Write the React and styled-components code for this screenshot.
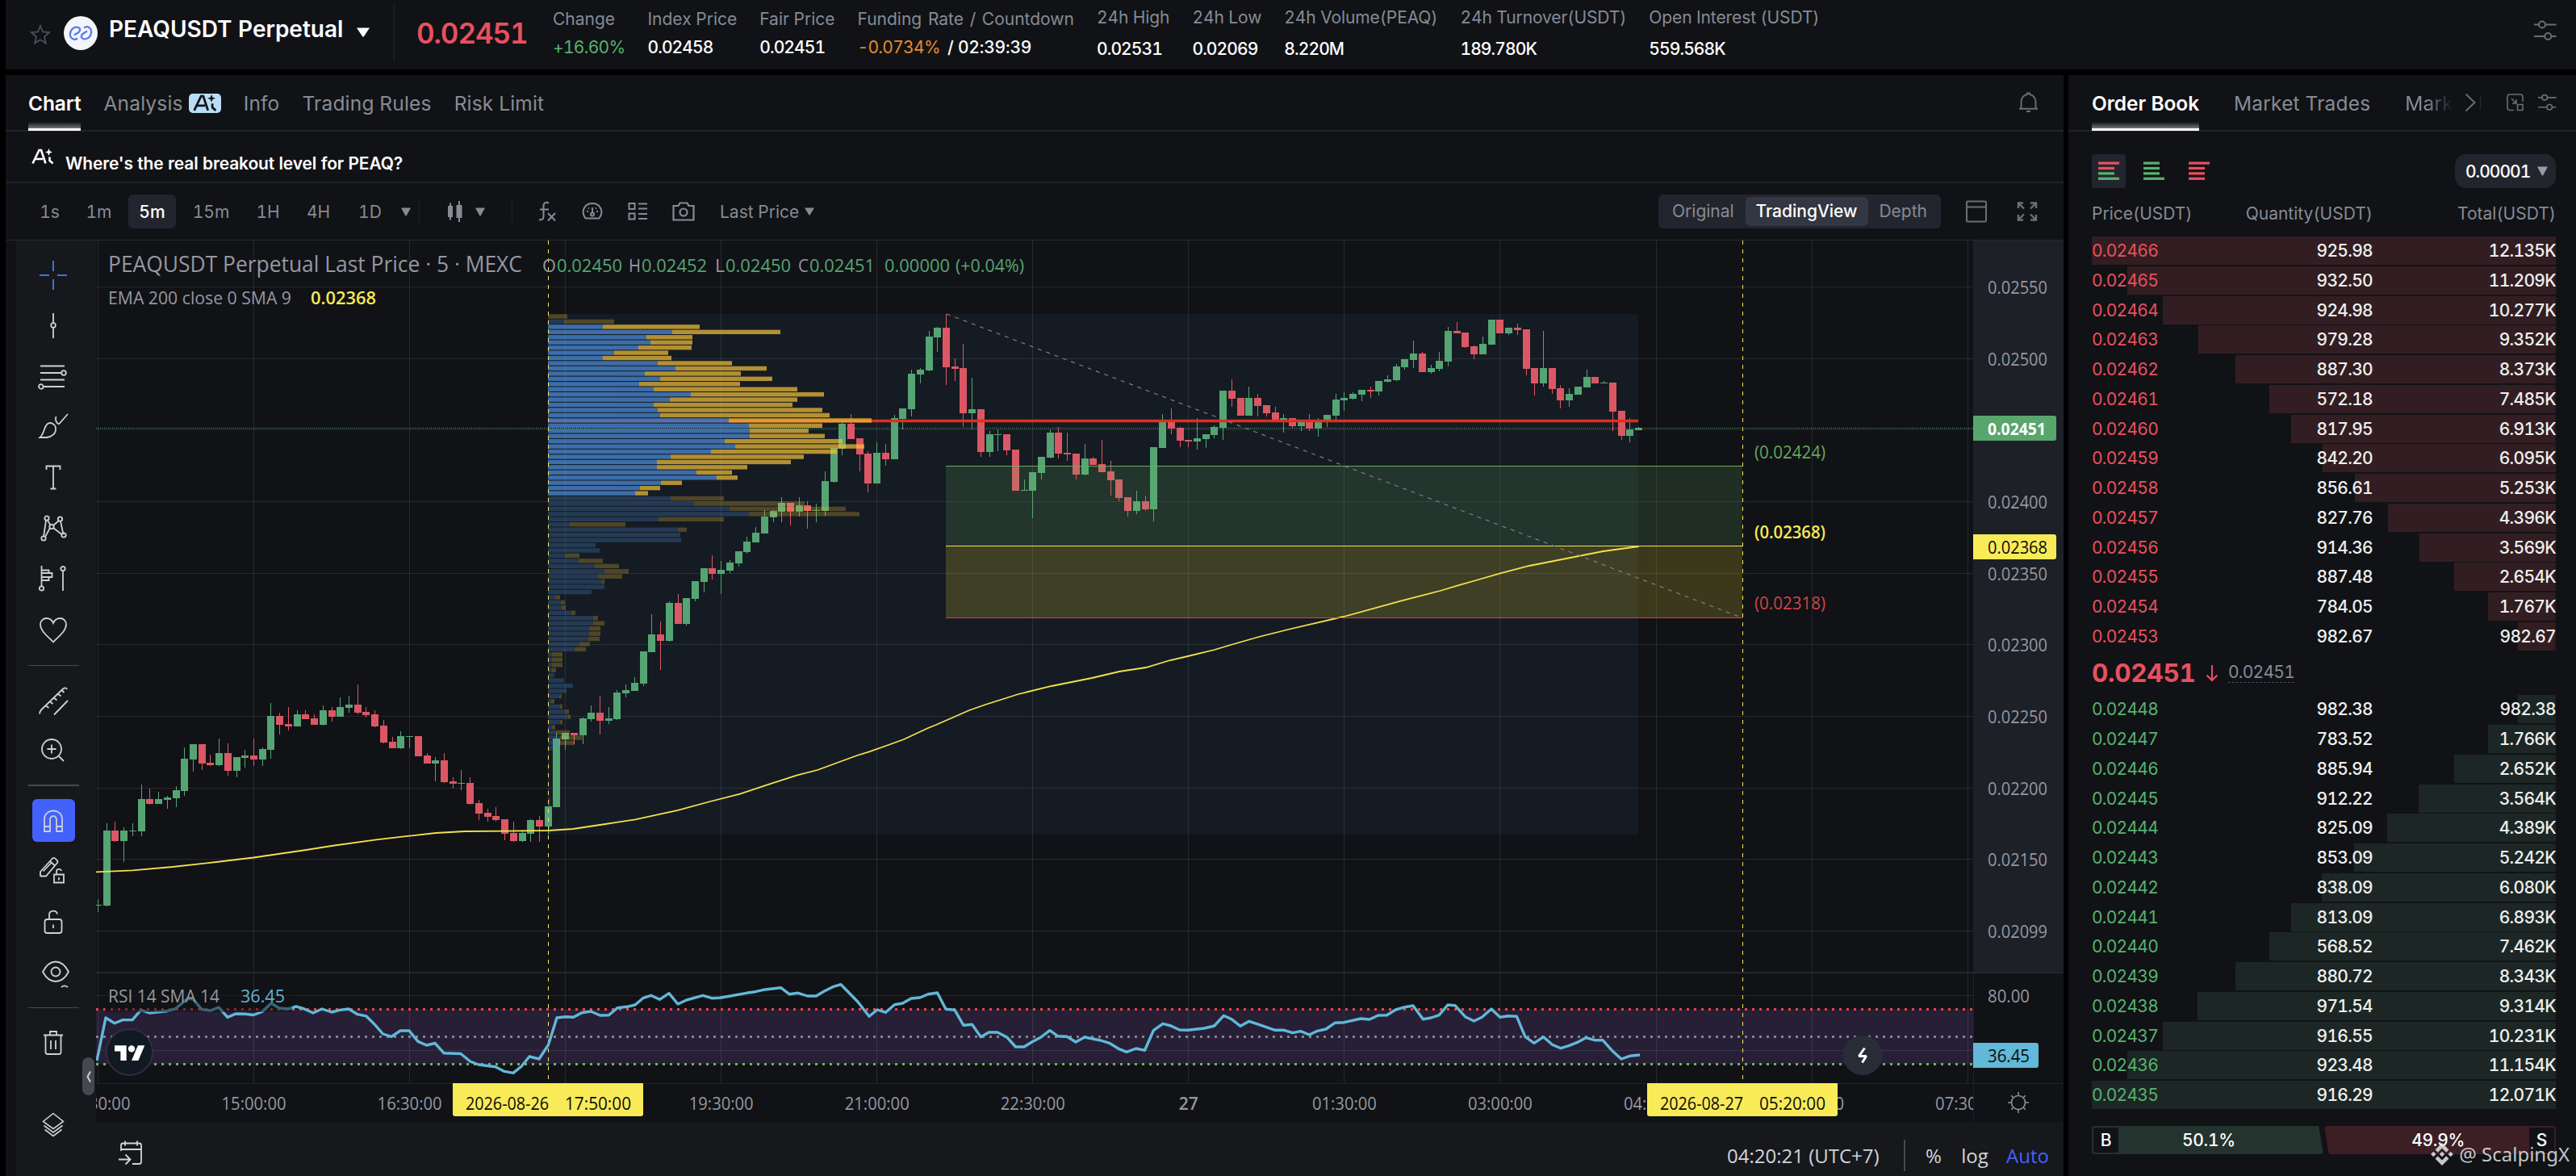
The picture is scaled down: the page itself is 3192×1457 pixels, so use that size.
import React from "react";
import styled, { createGlobalStyle, css } from "styled-components";

const UP = "#55a574";
const DOWN = "#dc5765";
const MUTED = "#868b94";

/* ---------- chart data ---------- */

// [direction, high, body top, body bottom, low] on the canvas scale
const CANDLES = `u1114,1121,1122,1130 u1020,1029,1122,1123 d1018,1029,1042,1043 u1025,1029,1042,1068 u1020,1029,1030,1036
u972,990,1030,1036 d977,990,996,997 u981,990,996,996 u986,988,991,1002 u974,979,989,1000
u926,940,980,986 u922,922,941,956 d922,922,946,954 d935,945,948,949 u915,933,948,949
d921,933,955,961 u938,938,955,963 u929,936,939,951 d915,936,941,949 u926,928,941,949
u871,887,929,940 d883,887,898,910 d876,897,900,905 u880,885,900,900 d880,885,891,891
d885,890,898,898 u874,880,898,899 d876,880,888,894 u864,876,888,888 u862,873,877,883
d848,873,883,885 d876,882,886,889 d880,885,900,901 d892,899,920,921 d913,919,927,927
u906,912,927,928 u912,912,913,927 d912,912,937,937 d933,936,946,946 u938,942,946,968
d933,942,969,970 d963,968,971,977 u954,970,971,979 d963,970,996,997 d991,995,1008,1016
d1002,1007,1012,1018 d1000,1011,1016,1018 d1015,1015,1033,1041 d1018,1032,1042,1043 u1029,1032,1042,1043
u1015,1016,1033,1043 d1011,1016,1024,1043 u999,999,1024,1034 u908,915,1000,1000 u908,908,916,929
d908,908,911,922 u889,890,911,922 u874,883,891,894 d862,883,893,910 u876,890,893,897
u855,858,891,892 u848,855,859,864 u839,846,856,856 u807,807,847,850 u761,786,808,808
d770,786,794,830 u745,747,794,795 d736,747,773,773 u741,741,773,775 u720,720,742,745
u704,704,721,734 d688,704,711,718 u695,706,711,736 u694,697,707,710 u683,683,698,702
u665,671,684,686 u653,660,672,672 u632,640,661,661 u632,633,641,647 u616,623,634,647
d623,623,634,651 u616,626,634,640 d621,626,633,655 u624,632,633,647 u584,596,633,639
u555,555,597,598 u523,525,556,564 d513,525,544,544 d543,543,563,584 d559,562,599,610
u548,561,599,599 d550,561,569,577 u514,518,569,569 u506,506,519,532 u458,463,507,516
u456,458,464,475 u410,417,459,460 u405,406,418,436 d389,406,455,477 d444,454,457,472
d426,456,512,529 u468,507,512,532 d507,507,560,566 u534,538,560,566 u532,538,539,559
d538,538,558,564 d557,557,608,608 u594,607,608,608 u585,585,608,642 u566,566,586,594
u532,536,567,568 d529,536,562,568 d536,561,563,571 d562,562,588,594 u550,568,588,589
d566,568,576,576 d545,575,585,585 d571,584,595,614 d594,594,617,621 d616,616,633,640
u608,621,633,637 d614,621,631,633 u554,554,631,646 u513,522,555,555 d506,522,531,538
d529,530,546,554 d545,545,547,554 u518,543,547,557 u538,538,544,555 u527,529,539,543
u484,484,530,545 d470,484,494,504 d493,493,515,515 u479,493,515,515 d488,493,503,516
d502,502,512,516 d504,511,521,521 u513,518,521,536 d518,518,528,530 u522,522,528,534
d513,522,531,534 u518,522,531,541 u514,514,521,529 u488,495,515,520 u486,493,496,509
u486,488,494,495 u483,483,489,497 d479,483,485,493 u472,472,485,490 u465,470,473,474
u451,454,471,472 u445,445,455,458 u422,438,446,456 d436,438,461,461 u452,456,461,463
u436,447,457,460 u405,410,448,454 d399,410,413,413 d412,412,430,431 d428,429,439,445
u417,426,439,439 u396,396,427,427 d396,396,413,413 u406,406,413,415 d401,406,409,415
d408,408,457,465 d456,456,475,490 u410,456,475,479 d456,456,482,488 d477,481,496,506
u481,488,496,504 u479,479,489,489 u458,467,480,480 d467,467,475,475 u472,474,475,475
d474,474,510,534 d509,509,540,545 u518,532,540,548 u529,530,533,533`
  .split(/\s+/)
  .map((s) => [s[0], ...s.slice(1).split(",").map(Number)]);

// volume profile rows: [up volume width, total width]
const PROFILE = [
  [0, 24], [20, 82], [68, 188], [154, 288], [122, 179], [127, 179], [112, 178], [82, 149], [68, 153], [136, 228],
  [158, 271], [120, 239], [139, 278], [113, 238], [131, 309], [177, 342], [151, 309], [131, 303], [136, 340], [139, 349],
  [224, 401], [249, 340], [250, 323], [250, 343], [219, 365], [232, 392], [202, 358], [152, 317], [135, 301], [135, 247],
  [184, 228], [209, 235], [140, 166], [114, 139], [108, 124], [152, 218], [181, 318], [225, 369], [249, 386], [137, 218],
  [27, 96], [161, 172], [164, 164], [165, 165], [59, 59], [64, 64], [22, 39], [38, 68], [58, 88], [70, 100],
  [62, 92], [67, 70], [70, 70], [54, 54], [9, 15], [16, 21], [17, 22], [29, 34], [56, 62], [56, 70],
  [51, 65], [51, 65], [50, 64], [39, 52], [33, 47], [5, 18], [5, 18], [5, 18], [5, 10], [8, 8],
  [20, 20], [31, 31], [23, 23], [14, 17], [4, 8], [15, 18], [22, 26], [25, 28], [15, 18], [5, 9],
  [10, 27], [15, 42], [14, 33], [7, 7], [1, 1], [1, 1], [1, 1], [1, 1], [1, 1], [1, 1],
  [1, 1], [1, 1], [1, 1], [3, 3], [3, 3], [3, 3], [3, 3], [3, 3], [3, 3], [3, 3],
];
const VALUE_AREA = [2, 34];

const EMA =
  "119,1080.4 164,1078.4 214,1074 268,1068 314,1062.5 379.5,1053 411,1048 464,1040.6 507,1035.7 540,1032 576,1030 625,1029.6 679.5,1029 710,1027 750,1021 787,1015.4 840,1003.8 880,993 917,983.7 953,971.6 988,960.4 1013,954 1062,936 1077,931.4 1098,924 1120,916 1150,902 1160,898 1201,880 1221,873 1262,860 1303,850 1353,840 1387,832 1420,827 1450,818 1472,813 1505,805 1525,799 1560,789 1600,779 1656,766 1665,764 1735.5,744.7 1784.5,732 1809,724.7 1829,719 1858,710.7 1895,701 1956,689 1986.5,683 2030.6,677";

const RSI =
  "120,1314 131,1261 142,1267.7 152,1263.6 164,1263.6 174.6,1251.4 185,1255 207,1252.7 217,1250 232,1237.6 239,1237.6 250,1250.6 261,1252 271,1248 282,1260.4 292,1256 303.6,1256.3 314,1257.5 325,1253.5 336,1243 346,1249 357,1250 367,1247 377,1250 388,1255 399,1250 411,1254 421,1251.4 432,1250 443,1256.7 453.6,1258.8 464,1269 474.5,1281 485,1284.3 496,1277 507,1277 518,1290.4 528.6,1295 539,1292.5 550,1304.7 571,1305.5 582.6,1315 593,1319 614,1321.7 625,1327.4 636,1329.4 646,1321.3 656,1309 668,1312 679.5,1294.5 690,1261 700.5,1259.7 710.5,1260.3 721,1254.7 732,1253 743.6,1258 754.4,1257.7 765,1248.7 777,1247.3 787,1245 796.7,1236.7 806.6,1233.3 817.4,1238.3 829,1230.7 840,1244 850.6,1239 871,1233.3 882,1236.7 892,1236.3 903.6,1234.3 925,1230.3 936,1228.7 946,1226.3 967.5,1223.7 978,1231.7 989,1230.3 1000.6,1234 1011.4,1234 1021.4,1228 1032,1222.7 1042,1219.7 1053,1231 1063,1241.3 1077,1259.3 1087,1251 1097.6,1254.3 1108.4,1244.7 1118.4,1243 1129,1237 1140,1236 1150,1231.7 1161.5,1230 1172,1250.3 1183,1251.3 1194,1270.3 1204.6,1269.3 1215.4,1284.7 1225.3,1279 1236,1279 1247.7,1285 1258.5,1297 1269,1297 1279,1290.7 1290,1285 1300.8,1276.7 1310.7,1283.7 1322,1284.3 1333,1291 1344,1285 1363.8,1289 1375.4,1292.7 1386,1299.3 1396,1303.3 1407.7,1299 1418.5,1301.3 1429.3,1276.7 1441,1268.3 1451,1271 1461.6,1276 1472.4,1276.3 1492,1274 1504.7,1271 1516.3,1258.3 1526,1262.7 1537,1271.3 1547.8,1265.3 1557.8,1268.7 1580,1276.3 1591,1276.3 1601.7,1279.7 1611.7,1277.7 1622.4,1282 1632.4,1277.3 1643,1275 1654,1267.3 1665.6,1266.7 1686.3,1262 1697,1263 1707.8,1258 1718.6,1257.7 1729.4,1251 1741,1247.7 1751,1246 1763.4,1262.7 1773.3,1261 1783.3,1257.7 1794,1245 1803,1245.7 1815.6,1259.7 1826.4,1265 1836.3,1260.3 1848,1250 1858.7,1260.3 1868.7,1258.7 1879.4,1259.3 1890,1284.7 1901,1292.3 1912.6,1284.7 1923.4,1294.3 1934,1298.7 1944,1295.7 1954,1291.7 1965,1285.7 1976,1288.7 1986,1288.7 1997.6,1301.7 2009,1312 2019.5,1308.3 2032,1307";

const PRICE_TICKS = [
  ["0.02550", 355.5],
  ["0.02500", 444.5],
  ["", 532.5],
  ["0.02400", 621.5],
  ["0.02350", 710.5],
  ["0.02300", 798.5],
  ["0.02250", 887.5],
  ["0.02200", 976.5],
  ["0.02150", 1064.5],
  ["0.02099", 1153.5],
];

const TIME_TICKS = [
  "13:30:00", "15:00:00", "16:30:00", "", "19:30:00", "21:00:00", "22:30:00",
  "27", "01:30:00", "03:00:00", "04:30:00", "06:00:00", "07:30:00",
];

/* ---------- order book data ---------- */

const ASKS = [
  ["0.02466", "925.98", "12.135K"],
  ["0.02465", "932.50", "11.209K"],
  ["0.02464", "924.98", "10.277K"],
  ["0.02463", "979.28", "9.352K"],
  ["0.02462", "887.30", "8.373K"],
  ["0.02461", "572.18", "7.485K"],
  ["0.02460", "817.95", "6.913K"],
  ["0.02459", "842.20", "6.095K"],
  ["0.02458", "856.61", "5.253K"],
  ["0.02457", "827.76", "4.396K"],
  ["0.02456", "914.36", "3.569K"],
  ["0.02455", "887.48", "2.654K"],
  ["0.02454", "784.05", "1.767K"],
  ["0.02453", "982.67", "982.67"],
];

const BIDS = [
  ["0.02448", "982.38", "982.38"],
  ["0.02447", "783.52", "1.766K"],
  ["0.02446", "885.94", "2.652K"],
  ["0.02445", "912.22", "3.564K"],
  ["0.02444", "825.09", "4.389K"],
  ["0.02443", "853.09", "5.242K"],
  ["0.02442", "838.09", "6.080K"],
  ["0.02441", "813.09", "6.893K"],
  ["0.02440", "568.52", "7.462K"],
  ["0.02439", "880.72", "8.343K"],
  ["0.02438", "971.54", "9.314K"],
  ["0.02437", "916.55", "10.231K"],
  ["0.02436", "923.48", "11.154K"],
  ["0.02435", "916.29", "12.071K"],
];

const toNumber = (s) => (s.endsWith("K") ? parseFloat(s) * 1000 : parseFloat(s));

/* ---------- chart ---------- */

const candleX = (i) => 121 + i * 10.7245;

const Grid = () => (
  <g stroke="#c3cbe0" strokeOpacity="0.12" shapeRendering="crispEdges">
    {TIME_TICKS.map((_, k) => (
      <path key={k} d={`M${121.5 + Math.round(193.05 * k)} 298V1342`} />
    ))}
    {PRICE_TICKS.map(([, y]) => (
      <path key={y} d={`M119 ${y}H2445`} />
    ))}
    <path d="M119 1233.5H2445M119 1301.5H2445" />
  </g>
);

const Candles = () => (
  <g shapeRendering="crispEdges">
    {CANDLES.map(([dir, high, top, bottom, low], i) => {
      const x = Math.round(candleX(i));
      return (
        <path
          key={i}
          fill={dir === "u" ? UP : DOWN}
          d={`M${x} ${high}h1V${low}h-1zM${x - 4} ${top}h9V${bottom}h-9z`}
        />
      );
    })}
  </g>
);

const VolumeProfile = () => (
  <g>
    {PROFILE.map(([up, total], i) => {
      const y = 389.3 + i * 6.444;
      const inArea = i >= VALUE_AREA[0] && i <= VALUE_AREA[1];
      return (
        <g key={i} opacity={inArea ? 0.7 : 0.26}>
          <rect x="679" y={y} width={up} height="5.4" fill="#4f91e2" />
          <rect x={679 + up} y={y} width={total - up} height="5.4" fill="#f6c238" />
        </g>
      );
    })}
  </g>
);

const Label = ({ x, y, w, size = 21, children, ...rest }) => (
  <text
    x={x}
    y={y}
    fontSize={size}
    fill="#9598a1"
    textLength={w}
    lengthAdjust="spacingAndGlyphs"
    {...rest}
  >
    {children}
  </text>
);

const Ohlc = () => (
  <>
    {[
      ["O", "0.02450", 672, 17, 82],
      ["H", "0.02452", 779, 15, 82],
      ["L", "0.02450", 886, 12, 82],
      ["C", "0.02451", 989, 13, 82],
    ].map(([k, v, x, kw, vw]) => (
      <React.Fragment key={k}>
        <Label x={x} y="336.5" w={kw}>{k}</Label>
        <Label x={x + kw + 1} y="336.5" w={vw - 1} fill={UP}>{v}</Label>
      </React.Fragment>
    ))}
    <Label x="1096" y="336.5" w="81" fill={UP}>0.00000</Label>
    <Label x="1184" y="336.5" w="85" fill={UP}>(+0.04%)</Label>
  </>
);

const TradingChart = () => (
  <ChartSvg viewBox="119 298 2438 1092">
    <rect x="119" y="298" width="2438" height="1092" fill="#111216" />
    <rect x="679" y="389" width="1351" height="645" fill="#151b22" />
    <rect x="119" y="1250.5" width="2326" height="68" fill="#261f36" />
    <Grid />
    <path d="M119 530.5H2445" stroke={UP} strokeWidth="1" strokeDasharray="1 1.5" />
    <Candles />
    <polyline points={EMA} fill="none" stroke="#f3e14f" strokeWidth="1.8" />
    <path d="M679 521.5H903" stroke="#dd301f" strokeWidth="3.4" strokeOpacity="0.5" />
    <path d="M903 521.5H2030" stroke="#dd301f" strokeWidth="3.4" />
    <VolumeProfile />

    <rect x="1172" y="578" width="987" height="99" fill="#6cba63" fillOpacity="0.17" />
    <rect x="1172" y="677" width="987" height="89" fill="#f5dd3d" fillOpacity="0.19" />
    <path d="M1172 577.5H2159" stroke="#6aad61" />
    <path d="M1172 676.5H2159" stroke="#f5e04f" />
    <path d="M1172 765.5H2159" stroke="#d04545" />
    <path d="M1173 389L2155 764" stroke="#82868f" strokeDasharray="5 6" strokeWidth="1.1" />
    <path d="M679.5 298V1342M2159.5 298V1342" stroke="#f8e85a" strokeDasharray="5 6" />

    {/* oscillator pane */}
    <path d="M119 1205H2557" stroke="#27282d" strokeWidth="2" />
    <g strokeWidth="3" strokeDasharray="3 6" shapeRendering="crispEdges">
      <path d="M119 1250.5H2445" stroke="#ee4444" />
      <path d="M119 1284.5H2445" stroke="#85838e" />
      <path d="M119 1318.5H2445" stroke="#6cb45c" />
    </g>
    <polyline points={RSI} fill="none" stroke="#61b8d7" strokeWidth="3.4" strokeLinejoin="round" />
    <rect x="130" y="1228" width="232" height="26" fill="#111216" fillOpacity="0.5" />

    {/* legends */}
    <Label x="134" y="336.5" w="513" size="28">PEAQUSDT Perpetual Last Price · 5 · MEXC</Label>
    <Ohlc />
    <Label x="134" y="376.5" w="227">EMA 200 close 0 SMA 9</Label>
    <Label x="385" y="376.5" w="81" fill="#f9eb57" fontWeight="600">0.02368</Label>
    <Label x="134" y="1242" w="138">RSI 14 SMA 14</Label>
    <Label x="298" y="1242" w="55" fill="#5db4d3">36.45</Label>

    <Label x="2174" y="567.5" w="88" fill="#64a85c">(0.02424)</Label>
    <Label x="2174" y="666.5" w="88" fill="#f9eb57" fontWeight="600">(0.02368)</Label>
    <Label x="2174" y="755" w="88" fill="#d04545">(0.02318)</Label>

    {/* price axis */}
    <rect x="2445" y="298" width="112" height="905.5" fill="#1d2027" />
    <path d="M2445.5 1206V1390M119 1342.5H2557" stroke="#202227" />
    {PRICE_TICKS.map(([label, y]) => label && <Label key={y} x="2463" y={y + 8} w="74">{label}</Label>)}
    <Label x="2463" y="1241.5" w="52">80.00</Label>
    <path d="M2445 515h100a3 3 0 0 1 3 3v25a3 3 0 0 1-3 3h-100z" fill="#58a66c" />
    <Label x="2463" y="538.5" w="72" fill="#fff" fontWeight="700">0.02451</Label>
    <path d="M2445 662h100a3 3 0 0 1 3 3v25a3 3 0 0 1-3 3h-100z" fill="#f9eb57" />
    <Label x="2463" y="685.5" w="74" fill="#0c0c0e">0.02368</Label>
    <path d="M2445 1292h78a3 3 0 0 1 3 3v25a3 3 0 0 1-3 3h-78z" fill="#61b8d7" />
    <Label x="2463" y="1315.500" w="52" fill="#0c0c0e">36.45</Label>

    {/* time axis */}
    <clipPath id="time-axis">
      <rect x="119" y="1343" width="2326" height="47" />
    </clipPath>
    <g clipPath="url(#time-axis)">
      {TIME_TICKS.map((label, k) => {
        const w = label.length > 2 ? 80 : 24;
        return (
          label && (
            <Label key={k} x={121.5 + 193.05 * k - w / 2} y="1375" w={w} fontWeight={w < 30 ? 600 : 400}>
              {label}
            </Label>
          )
        );
      })}
    </g>
    {[
      [561, "2026-08-26", "17:50:00"],
      [2041, "2026-08-27", "05:20:00"],
    ].map(([x, date, time]) => (
      <g key={x}>
        <path d={`M${x} 1342h236v38a3 3 0 0 1-3 3h-230a3 3 0 0 1-3-3z`} fill="#f9eb57" />
        <Label x={x + 16} y="1375" w="103" fill="#0c0c0e">{date}</Label>
        <Label x={x + 139} y="1375" w="82" fill="#0c0c0e">{time}</Label>
      </g>
    ))}
    <g fill="none" stroke="#8d9097" strokeWidth="1.6">
      <circle cx="2501" cy="1366" r="8.5" />
      <path d="M2501 1357v-4M2501 1375v4M2492 1366h-4M2510 1366h4M2494.6 1359.6l-2.4-2.4M2507.4 1359.6l2.4-2.4M2494.6 1372.4l-2.4 2.4M2507.4 1372.4l2.4 2.4" />
    </g>

    {/* floating marks */}
    <circle cx="160.5" cy="1303.5" r="28.5" fill="#111923" stroke="#332c40" strokeWidth="2" />
    <g transform="translate(142 1291) scale(1.05)" fill="#fff">
      <path d="M14 22H7V11H0V4h14v18zM28 22h-8l7.5-18h8L28 22z" />
      <circle cx="20" cy="8" r="4" />
    </g>
    <circle cx="2308" cy="1307.5" r="24.5" fill="#282d37" />
    <path d="M2310.5 1298.5l-7 10h9l-5 8" fill="none" stroke="#fff" strokeWidth="3" strokeLinejoin="bevel" />
  </ChartSvg>
);

/* ---------- icons ---------- */

const Icon = ({ w = 36, h = w, sw = 1.8, children }) => (
  <IconSvg width={w} height={h} viewBox={`0 0 ${w} ${h}`} strokeWidth={sw}>
    {children}
  </IconSvg>
);

const Caret = ({ w = 12, h = 11 }) => (
  <CaretSvg width={w} height={h} viewBox="0 0 12 11" preserveAspectRatio="none">
    <path d="M0 .5h12L6.5 10.5h-1z" />
  </CaretSvg>
);

const Sliders = ({ w = 28, h = 28 }) => (
  <IconSvg width={w} height={h} viewBox="0 0 28 28" strokeWidth="2">
    <path d="M0 6.500h6.500M14 6.500h13.500M0 21h13.500M21 21h6.500" />
    <circle cx="10" cy="6.500" r="4" />
    <circle cx="17.300" cy="21" r="4" />
  </IconSvg>
);

const AiMark = ({ w = 30 }) => (
  <IconSvg width={w} height={w * 0.68} viewBox="0 0 28 19" strokeWidth="2.6">
    <path d="M1.500 18.500L9.500 2h2.500l5.500 16.500M5 13h9M22.500 10.500v4.500l4 3.500" />
    <path d="M21.500 0l1.300 3.200L26 4.500l-3.200 1.300L21.500 9l-1.300-3.200L17 4.500l3.200-1.300z" fill="currentColor" stroke="none" />
  </IconSvg>
);

const TOOLS = [
  {
    h: 62.7,
    color: "#3f6fe8",
    icon: <Icon sw="2"><path d="M18 0v13M18 23v13M1 18h12M23 18h12" /></Icon>,
  },
  { h: 62.7, icon: <Icon><path d="M18 2v12.500M18 20v13" /><circle cx="18" cy="17" r="2.800" /></Icon> },
  {
    h: 62.7,
    icon: <Icon><path d="M2 4.500h30M2 13h26M2 21.500h30M5 30h27" /><circle cx="31" cy="13" r="2.800" /><circle cx="2.900" cy="30" r="2.800" /></Icon>,
  },
  {
    h: 62.7,
    icon: <Icon><path d="M1.500 31c5-4 5-13 9-16.500 4-3.500 10 0 10.500 5 .500 7-5 11-11.500 11.500zM21.500 5c-1.500 4 0 8 3.500 9.500M25 14.500l11-12.500" /></Icon>,
  },
  { h: 62.7, icon: <Icon><path d="M9.500 8V3.500h17V8M18 3.500V31M14.500 31.500h7" /></Icon> },
  {
    h: 62.7,
    icon: (
      <Icon>
        <path d="M9 8L6 28M11 8l4 6M18 14l7-6M27 9l3.500 16M8 28l6-11M18 17l11 8.500" />
        <circle cx="10" cy="5" r="2.700" /><circle cx="26.500" cy="6" r="2.700" /><circle cx="16" cy="15.500" r="2.700" />
        <circle cx="6" cy="30" r="2.700" /><circle cx="31" cy="26" r="2.700" />
      </Icon>
    ),
  },
  {
    h: 62.7,
    icon: (
      <Icon>
        <path d="M3.500 2v25M3.500 7.500h9v3.500h4v5h-4v4h-9M3.500 11h9M3.500 16h9M30 8.500V33" />
        <circle cx="3.500" cy="30" r="2.700" /><circle cx="30" cy="5.500" r="2.700" />
      </Icon>
    ),
  },
  {
    h: 62.7,
    icon: <Icon><path d="M18 33.500C12 27 2 20 2 11.500 2 7 5.500 4 9.500 4 13.500 4 16.500 6.500 18 10c1.500-3.500 4.500-6 8.500-6C30.500 4 34 7 34 11.500 34 20 24 27 18 33.500z" /></Icon>,
  },
  { divider: true, before: 12, after: 14 },
  {
    h: 60,
    icon: <Icon><path d="M1 33.500c0-3 1-4 2.500-5.500L30 2.500c2-1.500 4-1.500 5 .5M19 34.500L36 17M8.500 23l4 3M13.500 18l4 3M18.500 13.500l4 3M23.500 8.500l4 3M28.500 4l3 3" /></Icon>,
  },
  { h: 59, icon: <Icon><circle cx="16" cy="17" r="12" /><path d="M25 26l6 6M10.500 17h11M16 11.500v11" /></Icon> },
  { divider: true, before: 14, after: 11 },
  {
    h: 63,
    active: true,
    icon: <Icon><path d="M7 32V17c0-14 22-14 22 0v15h-7V18c0-6.500-8-6.500-8 0v14zM7 26h7M22 26h7" /></Icon>,
  },
  {
    h: 62,
    icon: (
      <Icon>
        <path d="M2 25v-6L17 2.500c2-2 8 3 6 5.500L9 24.500H2M14 6l6 5.500M5.500 18.500L16.500 7" />
        <path d="M19 22.500h12v10H19zM22 22.500v-4c0-3.500 5.500-3.500 6-.500M25 26v3.500" />
      </Icon>
    ),
  },
  {
    h: 64,
    icon: <Icon><rect x="7.500" y="15" width="21" height="17" rx="3" /><path d="M13 15V9.500c0-6 9-6.500 10-1M18 21.500v4.500" /></Icon>,
  },
  {
    h: 62,
    icon: <Icon><path d="M5 17C9 9.500 15 4.500 21 4.500S33 9.500 37 17c-4 7.500-10 12-16 12S9 24.500 5 17zM28 36c3-2.500 5-2.500 8 0" /><circle cx="21" cy="17" r="5.500" /></Icon>,
  },
  { divider: true, before: 12, after: 12 },
  {
    h: 61,
    icon: <Icon><path d="M6 8.500h24M14 8V4h8v4M8.500 9v20.500c0 1.500 1 2.500 2.500 2.500h14c1.500 0 2.500-1 2.500-2.500V9M15 15v11M21 15v11" /></Icon>,
  },
  {
    h: 143,
    icon: <Icon sw="1.6"><path d="M18 3.500L30.500 13.500 18 22.500 5.500 13.500zM6.500 18.500L18 27l11.500-8.500M7.500 23.500L18 31.500l10.500-8" /></Icon>,
  },
];

/* ---------- sections ---------- */

const STATS = [
  { label: "Change", value: "+16.60%", tone: "#57b26f" },
  { label: "Index Price", value: "0.02458" },
  { label: "Fair Price", value: "0.02451" },
  { label: "Funding Rate / Countdown", value: "/ 02:39:39", lead: "-0.0734%" },
  { label: "24h High", value: "0.02531", spread: true },
  { label: "24h Low", value: "0.02069", spread: true },
  { label: "24h Volume(PEAQ)", value: "8.220M", spread: true },
  { label: "24h Turnover(USDT)", value: "189.780K", spread: true },
  { label: "Open Interest (USDT)", value: "559.568K", spread: true },
];

const Ticker = () => (
  <Header>
    <Icon w={26} h={26} sw="1.8">
      <path d="M13 2l3 7.500 8 .700-6 5.300 1.800 8L13 19.300 6.200 23.500 8 15.500l-6-5.300 8-.700z" stroke="#4b4f5a" />
    </Icon>
    <Coin>
      <IconSvg width="30" height="20" viewBox="0 0 30 20" strokeWidth="2.300">
        <path d="M11 16.500c-5 3.500-10-1-9-6.500C3 4.500 8 1.500 12 3c3.500 1.500 2 5 .500 6L7 12.500M19 3.500c5-3.500 10 1 9 6.500-1 5.500-6 8.500-10 7-3.500-1.500-2-5-.500-6l5.500-3.500" />
      </IconSvg>
    </Coin>
    <Symbol>PEAQUSDT Perpetual</Symbol>
    <Caret w={16} h={12} />
    <LastPrice>0.02451</LastPrice>
    <Stats>
      {STATS.map((s) => (
        <Stat key={s.label} $spread={s.spread}>
          <StatLabel $wide={Boolean(s.lead)}>{s.label}</StatLabel>
          <StatValue $tone={s.tone} $timer={Boolean(s.lead)}>
            {s.lead && <Funding>{s.lead}</Funding>}
            {s.value}
          </StatValue>
        </Stat>
      ))}
    </Stats>
    <Sliders />
  </Header>
);

const ChartTabs = () => (
  <TabBar>
    <Tab $active>Chart</Tab>
    <Tab>
      Analysis
      <AiBadge><AiMark w={30} /></AiBadge>
    </Tab>
    <Tab>Info</Tab>
    <Tab>Trading Rules</Tab>
    <Tab>Risk Limit</Tab>
    <Bell>
      <Icon w={24} h={26} sw="1.900">
        <path d="M2.500 20.500V12C2.500 7 6 3.500 10 3V1.500h3V3c4 .500 7.500 4 7.500 9v8.500M0 20.700h23M9 24h5" />
      </Icon>
    </Bell>
  </TabBar>
);

const Toolbar = () => (
  <ToolbarRow>
    <Interval $w={49}>1s</Interval>
    <Interval $w={73}>1m</Interval>
    <Interval $w={59} $active>5m</Interval>
    <Interval $w={87}>15m</Interval>
    <Interval $w={54}>1H</Interval>
    <Interval $w={71}>4H</Interval>
    <Interval $w={57}>1D</Interval>
    <ToolGroup $w={33}><Caret /></ToolGroup>
    <ToolGroup $w={115}>
      <Icon w={20} h={28}>
        <path d="M1 7h6v14H1zM11.500 6h7v16h-7zM3 3.500h2v21H3zM14 1h2v26h-2z" fill="currentColor" stroke="none" />
      </Icon>
      <Caret />
    </ToolGroup>
    <IconStrip>
      <Icon w={24} h={26} sw="2">
        <path d="M14 2.500c-4-2-6.500 0-6.500 4V19c0 3.500-2 5-5.500 4M3 10.500h11M13 15l9 9.500M22 15l-9 9.500" />
      </Icon>
      <Icon w={26} h={24} sw="2">
        <path d="M4.500 20.500C-2 12 3.500 2 13 2s15 10 8.500 18.500zM13 7v7M6 12h2M18 12h2M8 7.500l1 1M18 7.500l-1 1" />
        <circle cx="13" cy="15.500" r="2" />
      </Icon>
      <Icon w={24} h={24} sw="2">
        <path d="M1.500 2h7v7h-7zM1.500 14.500h7v7h-7zM13 2.500h11M13 8.500h11M13 15h11M13 21h11" />
      </Icon>
      <Icon w={28} h={24} sw="2.200">
        <path d="M1.500 5h6l2-3.500h9l2 3.500h6v17.500h-25z" />
        <circle cx="14" cy="13" r="4.500" />
      </Icon>
    </IconStrip>
    <PriceType>
      Last Price
      <Caret w={12} h={10} />
    </PriceType>
    <Segment>
      <SegmentItem>Original</SegmentItem>
      <SegmentItem $active>TradingView</SegmentItem>
      <SegmentItem>Depth</SegmentItem>
    </Segment>
    <WindowIcons>
      <Icon w={26} h={28} sw="2"><rect x="1" y="1.500" width="24" height="25" rx="1.500" /><path d="M1 8.500h24" /></Icon>
      <Icon w={26} h={26} sw="2.400">
        <path d="M2 9V2.500h6M2 2.500l7 7M17 2.500h7V9M24 2.500l-7 7M2 17v6.500h6M2 23.500l7-7M24 17v6.500h-7M24 23.500l-7-7" />
      </Icon>
    </WindowIcons>
  </ToolbarRow>
);

const BookRow = ({ row, max, side }) => {
  const [price, qty, total] = row;
  const pct = (toNumber(total) / max) * 100;
  return (
    <Row $side={side} style={{ backgroundSize: `${pct}% 100%` }}>
      <Price $side={side}>{price}</Price>
      <Cell>{qty}</Cell>
      <Cell>{total}</Cell>
    </Row>
  );
};

const OrderBook = () => (
  <BookPanel>
    <BookTabs>
      <Tab $active>Order Book</Tab>
      <Tab>Market Trades</Tab>
      <FadedTab>Mark</FadedTab>
      <BookTools>
        <Icon w={14} h={24}><path d="M1.500 1.500L12.500 12 1.500 22.500" /></Icon>
        <Tick />
        <Icon w={21} h={22} sw="1.600">
          <path d="M9 20.500H4c-2 0-3-1-3-3V4c0-2 1-3 3-3h13c2 0 3 1 3 3v6M6 6l6 6M12 7v5H7M13.500 13.500H20V20.500h-6.500z" />
        </Icon>
        <Sliders w={23} h={24} />
      </BookTools>
    </BookTabs>
    <BookControls>
      <ModeButton $active>
        <ModeIcon lines={["rL", "rS", "gS", "gL"]} />
      </ModeButton>
      <ModeButton>
        <ModeIcon lines={["gS", "gS", "gS", "gL"]} />
      </ModeButton>
      <ModeButton>
        <ModeIcon lines={["rL", "rS", "rS", "rS"]} />
      </ModeButton>
      <Precision>
        0.00001
        <Caret w={13} h={12} />
      </Precision>
    </BookControls>
    <BookHead>
      <span>Price(USDT)</span>
      <Cell $head>Quantity(USDT)</Cell>
      <Cell $head>Total(USDT)</Cell>
    </BookHead>
    <Rows>
      {ASKS.map((r) => <BookRow key={r[0]} row={r} max={12135} side="ask" />)}
    </Rows>
    <MidPrice>
      <b>0.02451</b>
      <Icon w={16} h={22} sw="2"><path d="M8 1v19M1.500 13.500L8 20l6.500-6.500" stroke="#e9505e" /></Icon>
      <Mark>0.02451</Mark>
    </MidPrice>
    <Rows>
      {BIDS.map((r) => <BookRow key={r[0]} row={r} max={12071} side="bid" />)}
    </Rows>
    <Ratio>
      <BuySide>
        <SideTag>B</SideTag>
        <span>50.1%</span>
      </BuySide>
      <SellSide>
        <span>49.9%</span>
        <SideTag>S</SideTag>
      </SellSide>
    </Ratio>
  </BookPanel>
);

const ModeIcon = ({ lines }) => (
  <svg width="26" height="24" viewBox="0 0 26 24">
    {lines.map((l, i) => (
      <rect key={i} x="0" y={0.5 + i * 6.4} width={l[1] === "L" ? 26 : 20} height="3.200" fill={l[0] === "r" ? "#e9505e" : "#57b26f"} />
    ))}
  </svg>
);

const App = () => (
  <>
    <GlobalStyle />
    <Page>
      <Ticker />
      <Main>
        <ChartPanel>
          <ChartTabs />
          <Question>
            <AiMark w={28} />
            <span>Where's the real breakout level for PEAQ?</span>
          </Question>
          <Toolbar />
          <Workspace>
            <Toolbox>
              {TOOLS.map((t, i) =>
                t.divider ? (
                  <ToolDivider key={i} $before={t.before} $after={t.after} />
                ) : (
                  <Tool key={i} $h={t.h} $color={t.color}>
                    {t.active ? <ActiveTool>{t.icon}</ActiveTool> : t.icon}
                  </Tool>
                )
              )}
              <Handle>
                <Icon w={8} h={16} sw="2"><path d="M6 1.500L2.500 8 6 14.500" /></Icon>
              </Handle>
            </Toolbox>
            <Canvas>
              <TradingChart />
              <BottomBar>
                <Icon w={34} h={34}>
                  <path d="M5 14V7c0-1.500 1-2.500 2.500-2.500h20C29 4.500 30 5.500 30 7v20.500c0 1.500-1 2.500-2.500 2.500H19M5 12h25M10 1.500v6M25 1.500v6M2 24.500h14M10.500 18.500l6 6-6 6" />
                </Icon>
                <Clock>04:20:21 (UTC+7)</Clock>
                <Scale $w={22}>%</Scale>
                <Scale $w={32}>log</Scale>
                <Scale $w={51} $active>Auto</Scale>
              </BottomBar>
            </Canvas>
          </Workspace>
        </ChartPanel>
        <OrderBook />
      </Main>
      <Watermark>
        <svg width="28" height="28" viewBox="0 0 28 28" fill="currentColor">
          <path d="M14 0l8.500 8.500-3.300 3.300L14 6.600l-5.200 5.200-3.300-3.300zM14 28l8.500-8.500-3.300-3.300L14 21.400l-5.200-5.200-3.300 3.300zM14 10.700l3.300 3.300-3.300 3.300-3.300-3.300zM3.300 10.700L6.600 14l-3.300 3.300L0 14zM24.700 10.700L28 14l-3.300 3.300L21.400 14z" />
        </svg>
        <span>@ ScalpingX</span>
      </Watermark>
    </Page>
  </>
);

/* ---------- styles ---------- */

const GlobalStyle = createGlobalStyle`
  * { box-sizing: border-box; }
  body {
    margin: 0;
    background: #000;
    overflow: hidden;
  }
`;

const Page = styled.div`
  position: relative;
  display: flex;
  flex-direction: column;
  gap: 7px;
  width: 3192px;
  height: 1457px;
  padding-left: 7px;
  background: #000;
  color: #fff;
  font-family: Inter, "Liberation Sans", sans-serif;
  font-size: 21px;
  font-variant-numeric: tabular-nums;
  overflow: hidden;
`;

const IconSvg = styled.svg`
  display: block;
  flex: none;
  fill: none;
  stroke: currentColor;
  overflow: visible;
`;

const CaretSvg = styled.svg`
  display: block;
  flex: none;
  fill: currentColor;
`;

const Header = styled.header`
  display: flex;
  align-items: center;
  height: 86px;
  flex: none;
  padding: 0 24px 0 30px;
  background: #111216;
  color: #fff;
  > svg:last-child {
    margin: -10px 0 0 auto;
    color: #6b6e75;
  }
`;

const Coin = styled.div`
  display: flex;
  align-items: center;
  justify-content: center;
  width: 42px;
  height: 42px;
  margin: -4px 0 0 16px;
  border-radius: 50%;
  background: #f4f5f9;
  color: #5b78f0;
`;

const Symbol = styled.div`
  width: 289px;
  margin: -14px 18px 0 14px;
  font-size: 28px;
  font-weight: 600;
  white-space: nowrap;
  + svg { margin-top: -6px; }
`;

const LastPrice = styled.div`
  display: flex;
  align-items: center;
  width: 197px;
  height: 70px;
  margin: -4px 0 0 30px;
  padding-left: 27px;
  border-left: 1px solid #22252c;
  color: #e9505e;
  font-size: 35px;
  font-weight: 600;
  letter-spacing: -1.1px;
`;

const Stats = styled.div`
  display: flex;
  gap: 28px;
  height: 86px;
`;

const Stat = styled.div`
  display: flex;
  flex-direction: column;
  gap: ${(p) => (p.$spread ? 4 : 0)}px;
  padding-top: ${(p) => (p.$spread ? 3.5 : 5.5)}px;
  line-height: 35px;
  white-space: nowrap;
  letter-spacing: ${(p) => (p.$spread ? -0.1 : 0)}px;
`;

const StatLabel = styled.div`
  color: ${MUTED};
  word-spacing: ${(p) => (p.$wide ? 2 : 0)}px;
`;

const StatValue = styled.div`
  color: ${(p) => p.$tone || "#fff"};
  font-weight: ${(p) => (p.$tone ? 400 : 500)};
  letter-spacing: ${(p) => (p.$timer ? -0.2 : p.$tone ? -0.7 : -0.9)}px;
`;

const Funding = styled.span`
  margin-right: 9px;
  color: #ea8b2d;
  font-weight: 400;
  letter-spacing: -0.7px;
`;

const Main = styled.main`
  display: grid;
  grid-template-columns: 2550px 629px;
  gap: 6px;
  flex: 1;
  min-height: 0;
`;

const ChartPanel = styled.section`
  display: flex;
  flex-direction: column;
  background: #111216;
`;

const TabBar = styled.nav`
  display: flex;
  align-items: stretch;
  gap: 28px;
  height: 70px;
  flex: none;
  padding: 0 31px 0 28px;
  border-bottom: 2px solid #202229;
  font-size: 24.5px;
`;

const Tab = styled.div`
  position: relative;
  display: flex;
  align-items: center;
  padding-top: 1px;
  color: ${MUTED};
  letter-spacing: 0.18px;
  white-space: nowrap;
  ${(p) =>
    p.$active &&
    css`
      color: #fff;
      font-weight: 600;
      letter-spacing: -0.1px;
      &:after {
        content: "";
        position: absolute;
        left: 0;
        right: 0;
        bottom: -1px;
        height: 11px;
        background: linear-gradient(transparent, rgba(190, 190, 205, 0.55) 70%, #fff 71%);
      }
    `}
`;

const AiBadge = styled.span`
  display: flex;
  align-items: center;
  justify-content: center;
  width: 40px;
  height: 24px;
  margin-left: 7px;
  border-radius: 5px;
  background: #b9ddf7;
  color: #111216;
`;

const Bell = styled.div`
  display: flex;
  align-items: center;
  margin-left: auto;
  color: #6b6e75;
`;

const Question = styled.div`
  display: flex;
  align-items: center;
  gap: 14px;
  height: 64px;
  flex: none;
  padding-left: 32px;
  border-bottom: 2px solid #202229;
  font-weight: 600;
  letter-spacing: -0.15px;
  > svg { margin-top: -1px; }
  > span { margin-top: 17px; }
`;

const ToolbarRow = styled.div`
  display: flex;
  align-items: center;
  height: 71px;
  flex: none;
  padding: 0 32px 0 30px;
  border-bottom: 1px solid #26282e;
  color: ${MUTED};
`;

const Interval = styled.div`
  width: ${(p) => p.$w}px;
  height: 42px;
  line-height: 43px;
  border-radius: 6px;
  text-align: center;
  ${(p) =>
    p.$active &&
    css`
      background: #23252e;
      color: #fff;
      font-weight: 500;
    `}
`;

const ToolGroup = styled.div`
  display: flex;
  align-items: center;
  justify-content: center;
  gap: 15px;
  width: ${(p) => p.$w}px;
  height: 28px;
  border-right: 1px solid #202229;
`;

const IconStrip = styled.div`
  display: flex;
  align-items: center;
  gap: 31px;
  margin-left: 31px;
`;

const PriceType = styled.div`
  display: flex;
  align-items: center;
  gap: 7px;
  margin-left: 31px;
`;

const Segment = styled.div`
  display: flex;
  align-items: center;
  justify-content: space-between;
  width: 350px;
  height: 42px;
  margin-left: auto;
  padding: 0 17px;
  border-radius: 6px;
  background: #23252e;
`;

const SegmentItem = styled.div`
  line-height: 36px;
  ${(p) =>
    p.$active &&
    css`
      width: 152px;
      border-radius: 6px;
      background: #333643;
      color: #fff;
      font-weight: 500;
      text-align: center;
    `}
`;

const WindowIcons = styled.div`
  display: flex;
  align-items: center;
  gap: 37px;
  margin-left: 31px;
  color: #6b6e75;
`;

const Workspace = styled.div`
  display: grid;
  grid-template-columns: 99px 2438px;
  flex: 1;
  padding-left: 13px;
`;

const Toolbox = styled.aside`
  position: relative;
  display: flex;
  flex-direction: column;
  align-items: center;
  padding: 12px 7px 0 0;
  background: #17181c;
  color: #cdd0d6;
`;

const Tool = styled.div`
  display: flex;
  align-items: center;
  justify-content: center;
  height: ${(p) => p.$h}px;
  flex: none;
  color: ${(p) => p.$color || "inherit"};
`;

const ToolDivider = styled.div`
  width: 63px;
  height: 1.5px;
  margin: ${(p) => p.$before}px 0 ${(p) => p.$after}px;
  flex: none;
  background: #454950;
`;

const ActiveTool = styled.div`
  display: flex;
  align-items: center;
  justify-content: center;
  width: 53px;
  height: 53px;
  border-radius: 6px;
  background: #4361fb;
`;

const Handle = styled.div`
  position: absolute;
  right: 2px;
  top: 1012px;
  display: flex;
  align-items: center;
  justify-content: center;
  width: 15px;
  height: 47px;
  border-radius: 8px;
  background: #444950;
`;

const Canvas = styled.div`
  display: flex;
  flex-direction: column;
`;

const ChartSvg = styled.svg`
  display: block;
  width: 2438px;
  height: 1092px;
  flex: none;
  font-family: "Open Sans", "Noto Sans", sans-serif;
`;

const BottomBar = styled.footer`
  display: flex;
  align-items: center;
  flex: 1;
  padding: 7px 19px 0 26px;
  background: #17181c;
  color: #d1d4dc;
  font-family: "Open Sans", "Noto Sans", sans-serif;
  font-size: 24px;
  > svg { margin-bottom: 4px; }
`;

const Clock = styled.div`
  display: flex;
  align-items: center;
  width: 221px;
  height: 39px;
  margin-left: auto;
  border-right: 2px solid #454950;
  white-space: nowrap;
`;

const Scale = styled.div`
  display: flex;
  justify-content: center;
  width: ${(p) => p.$w}px;
  margin-left: 24px;
  color: ${(p) => (p.$active ? "#4163ff" : "inherit")};
`;

const BookPanel = styled.section`
  display: flex;
  flex-direction: column;
  background: #111216;
`;

const BookTabs = styled(TabBar)`
  gap: 43px;
  padding: 0 25px 0 29px;
`;

const FadedTab = styled(Tab)`
  width: 57px;
  -webkit-mask-image: linear-gradient(90deg, #000 45%, transparent 105%);
  mask-image: linear-gradient(90deg, #000 45%, transparent 105%);
`;

const BookTools = styled.div`
  display: flex;
  align-items: center;
  margin-left: -26px;
  color: #6b6e75;
  > svg:nth-child(3) { margin: 0 18px 0 32px; }
`;

const Tick = styled.i`
  width: 1px;
  height: 18px;
  margin-left: 5px;
  background: #26282e;
`;

const BookControls = styled.div`
  display: flex;
  align-items: center;
  gap: 14px;
  height: 42px;
  margin: 28px 25px 0 29px;
`;

const ModeButton = styled.div`
  display: flex;
  align-items: center;
  justify-content: center;
  width: 42px;
  height: 42px;
  border-radius: 4px;
  background: ${(p) => (p.$active ? "#23252e" : "transparent")};
`;

const Precision = styled.div`
  display: flex;
  align-items: center;
  justify-content: space-between;
  width: 125px;
  height: 42px;
  margin-left: auto;
  padding: 0 10px 0 13px;
  border-radius: 14px;
  background: #23252e;
  font-weight: 500;
  letter-spacing: -1px;
  svg { color: #9a9da5; }
`;

const BookHead = styled.div`
  display: grid;
  grid-template-columns: 174px 174px 227px;
  height: 60px;
  line-height: 64px;
  margin: 0 25px 0 29px;
  color: ${MUTED};
  > span:first-child { white-space: nowrap; }
`;

const Cell = styled.span`
  text-align: right;
  font-weight: ${(p) => (p.$head ? 400 : 500)};
  letter-spacing: ${(p) => (p.$head ? 0 : -0.7)}px;
`;

const Rows = styled.div`
  display: flex;
  flex-direction: column;
  gap: 1.75px;
  margin: 0 25px 0 29px;
`;

const Row = styled.div`
  display: grid;
  grid-template-columns: 174px 174px 227px;
  height: 35px;
  line-height: 36px;
  color: #efefef;
  background: ${(p) =>
    p.$side === "ask" ? "linear-gradient(#321e22, #321e22)" : "linear-gradient(#1c2725, #1c2725)"};
  background-position: right top;
  background-repeat: no-repeat;
`;

const Price = styled.span`
  color: ${(p) => (p.$side === "ask" ? "#e9505e" : "#57b26f")};
  letter-spacing: -0.75px;
`;

const MidPrice = styled.div`
  display: flex;
  align-items: center;
  height: 55.5px;
  padding-left: 29px;
  b {
    width: 141px;
    color: #e9505e;
    font-size: 31.5px;
    font-weight: 700;
    letter-spacing: -0.3px;
  }
`;

const Mark = styled.span`
  margin: -2px 0 0 12px;
  border-bottom: 1px dashed #474b55;
  color: ${MUTED};
  letter-spacing: -0.75px;
`;

const Ratio = styled.div`
  display: grid;
  grid-template-columns: 287px 287px;
  gap: 1px;
  height: 35px;
  margin: 21px 25px 0 29px;
  font-weight: 500;
  letter-spacing: -0.3px;
`;

const BuySide = styled.div`
  display: flex;
  align-items: center;
  padding: 2px;
  border-radius: 4px;
  background: #24332d;
  clip-path: polygon(0 0, 98% 0, 100% 100%, 0 100%);
  > span:last-child { margin-left: 79px; }
`;

const SellSide = styled(BuySide)`
  justify-content: flex-end;
  background: #3c1e25;
  clip-path: polygon(0 0, 100% 0, 100% 100%, 2% 100%);
  > span:first-child { margin-right: 80px; }
  > span:last-child { margin-left: 0; }
`;

const SideTag = styled.span`
  width: 31px;
  line-height: 31px;
  border-radius: 2px;
  background: #111216;
  text-align: center;
`;

const Watermark = styled.div`
  position: absolute;
  right: 8px;
  bottom: 10px;
  display: flex;
  align-items: center;
  gap: 7px;
  color: rgba(230, 230, 232, 0.85);
  font-family: "Noto Sans", sans-serif;
  font-size: 24px;
  line-height: 34px;
`;

export default App;
